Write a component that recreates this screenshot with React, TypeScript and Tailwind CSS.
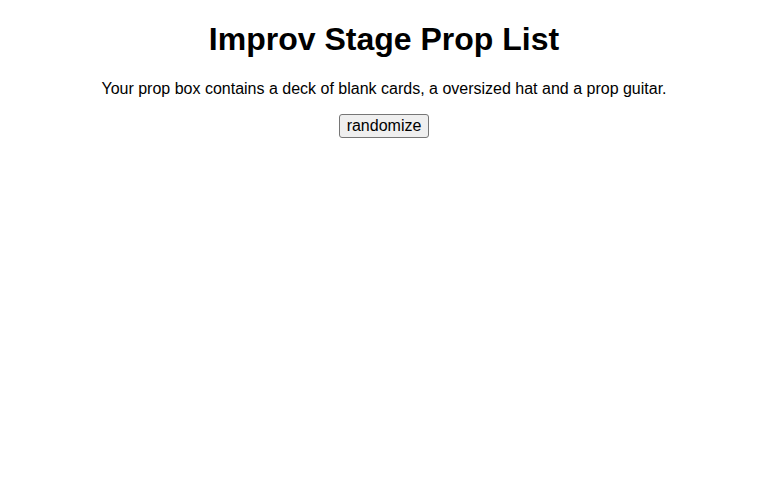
import { useState } from "react";

const props = [
  "a deck of blank cards",
  "a oversized hat",
  "a prop guitar",
  "a rubber chicken",
  "a folding chair",
  "a toy telephone",
];

const pick = () => {
  const shuffled = [...props].sort(() => Math.random() - 0.5);
  return shuffled.slice(0, 3);
};

export default function App() {
  const [items, setItems] = useState(["a deck of blank cards", "a oversized hat", "a prop guitar"]);

  return (
    <div className="text-center text-black font-['Liberation_Sans',Arial,sans-serif]">
      <h1 className="pt-[21px] text-[32px] font-bold leading-[37px]">Improv Stage Prop List</h1>
      <p className="mt-[22px] text-base leading-[18px]">
        Your prop box contains {items[0]}, {items[1]} and {items[2]}.
      </p>
      <button
        onClick={() => setItems(pick())}
        className="mt-[16px] h-[24px] px-[7px] text-base leading-[18px] bg-[#efefef] border border-[#767676] rounded-[3px] hover:bg-[#e5e5e5]"
      >
        randomize
      </button>
    </div>
  );
}
